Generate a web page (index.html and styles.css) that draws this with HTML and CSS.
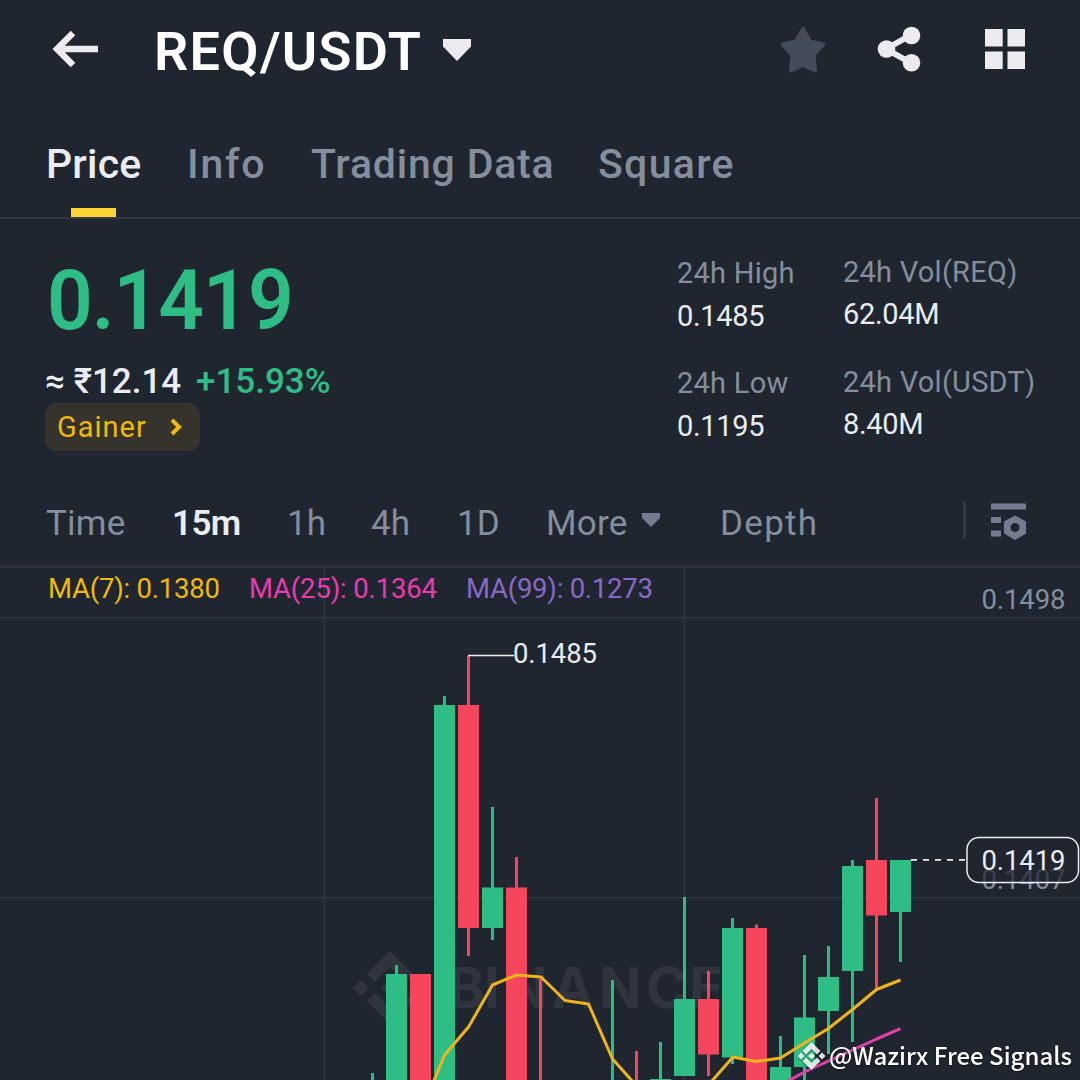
FILE: index.html
```html
<!DOCTYPE html>
<html lang="en">
<head>
<meta charset="utf-8">
<title>REQ/USDT</title>
<link rel="stylesheet" href="styles.css">
</head>
<body>
<main class="screen">
  <header class="header">
    <svg class="back" viewBox="0 0 46 36"><path d="M21 2 5 18l16 16M5 18h41" fill="none" stroke="currentColor" stroke-width="6.4"/></svg>
    <h1 class="pair">REQ/USDT</h1>
    <svg class="pair-caret" viewBox="0 0 28 22"><path d="M0 0h28v7.500L14 22 0 7.500z" fill="currentColor"/></svg>
    <div class="actions">
      <svg class="star" viewBox="0 0 44 46"><path d="M22 2l6.900 12.500L42 17.400l-9.500 10.800L34 43.500 22 38 10 43.500l1.500-15.300L2 17.400l13.100-2.900z" fill="currentColor" stroke="currentColor" stroke-width="4" stroke-linejoin="round"/></svg>
      <svg class="share" viewBox="0 0 44 46"><path d="M34 9 9 23l25 14" fill="none" stroke="currentColor" stroke-width="6"/><circle cx="9.500" cy="23" r="8.800" fill="currentColor"/><circle cx="34.500" cy="9.500" r="8.800" fill="currentColor"/><circle cx="34.500" cy="36.700" r="8.800" fill="currentColor"/></svg>
      <svg class="grid-icon" viewBox="0 0 40 40"><path d="M0 0h17.700v17.500H0zM22.500 0H40v17.500H22.500zM0 22.500h17.700V40H0zM22.500 22.500H40V40H22.500z" fill="currentColor"/></svg>
    </div>
  </header>

  <nav class="tabs">
    <a class="tab tab-price active">Price</a>
    <a class="tab tab-info">Info</a>
    <a class="tab tab-trading">Trading Data</a>
    <a class="tab tab-square">Square</a>
  </nav>

  <section class="summary">
    <div class="quote">
      <div class="last">0.1419</div>
      <div class="converted"><span class="fiat">≈ ₹12.14</span><span class="change">+15.93%</span></div>
      <div class="badge"><span>Gainer</span><svg class="chevron" viewBox="0 0 12 18"><path d="M2 2l7 7-7 7" fill="none" stroke="currentColor" stroke-width="4"/></svg></div>
    </div>
    <dl class="stats stats-range">
      <dt>24h High</dt><dd>0.1485</dd>
      <dt>24h Low</dt><dd>0.1195</dd>
    </dl>
    <dl class="stats stats-volume">
      <dt>24h Vol(REQ)</dt><dd>62.04M</dd>
      <dt>24h Vol(USDT)</dt><dd>8.40M</dd>
    </dl>
  </section>

  <div class="intervals">
    <span class="interval i-time">Time</span>
    <span class="interval i-15m selected">15m</span>
    <span class="interval i-1h">1h</span>
    <span class="interval i-4h">4h</span>
    <span class="interval i-1d">1D</span>
    <span class="interval i-more">More</span>
    <svg class="more-caret" viewBox="0 0 18 14"><path d="M0 0h18v5L9 14 0 5z" fill="currentColor"/></svg>
    <span class="interval i-depth">Depth</span>
    <i class="separator"></i>
    <svg class="settings" viewBox="0 0 36 37"><path d="M0 .5h35v6H0zM0 14h10v6H0zM0 27.500h10v6H0z" fill="currentColor"/><path fill-rule="evenodd" d="M24 12.500l11 6v12L24 37l-11-6.500v-12zM24 20a4.500 4.500 0 1 0 0 9 4.500 4.500 0 0 0 0-9z" fill="currentColor"/></svg>
  </div>

  <svg class="chart" viewBox="0 568 1080 512">
    <g class="watermark">
      <path d="M390 951l23 23-8 8-15-15-15 15-8-8zM390 1024l23-23-8-8-15 15-15-15-8 8zM361 980l8 8-8 8-8-8zM419 980l8 8-8 8-8-8zM390 979l9 9-9 9-9-9z"/>
      <text x="448 484 505 552 599 646 689" y="1008">BINANCE</text>
    </g>
    <path class="gridlines" d="M0 617.500H1080M0 897.500H1080M324.500 568V1080M684.500 568V1080"/>
    <g class="up">
      <path class="wick" d="M372.500 1073V1080M396.500 965V1080M444.500 696V1080M492.500 807V940M612.500 980V1080M660.500 1042V1080M684.500 897V1076M732.500 918V1064M780.500 1036V1080M804.500 955V1080M828.500 946V1054M852.500 860V1042M900.500 860V962"/>
      <path d="M386 974h21v106h-21zM434 705h21v375h-21zM482 887.500h21V928h-21zM650 1079h21v1h-21zM674 999h21v77h-21zM722 928h21v129.500h-21zM770 1067h21v13h-21zM794 1017.500h21V1067h-21zM818 977h21v34h-21zM842 866h21v105h-21zM890 860h21v52h-21z"/>
    </g>
    <g class="down">
      <path class="wick" d="M468.500 656V956M516.500 857V1080M540.500 979V1080M636.500 1051V1080M708.500 971V1076M756.500 924.500V1080M876.500 798V989"/>
      <path d="M410 974h21v106h-21zM458 705h21v223h-21zM506 887.500h21V1080h-21zM698 999h21v55.500h-21zM746 928h21v152h-21zM866 860h21v55.500h-21z"/>
    </g>
    <path class="line ma25" d="M786 1082L804.500 1072 828.500 1061 876.500 1039 900.500 1028.700"/>
    <path class="line ma7" d="M433 1083L444.500 1055 468.500 1027 492.500 985 516.500 975 541 977 565 1000.500 588.500 1004 612.500 1059 634 1083M711 1082L733 1057 756 1061.500 780.500 1058 804.500 1043 828.500 1028.500 852.500 1009.500 876.500 989.500 900.500 980"/>
    <path class="marker" d="M468 655.500H514"/>
    <text class="label hi" x="513" y="663" textLength="84">0.1485</text>
    <text class="label c7" x="48" y="598" textLength="172">MA(7): 0.1380</text>
    <text class="label c25" x="249" y="598" textLength="188">MA(25): 0.1364</text>
    <text class="label c99" x="466" y="598" textLength="187">MA(99): 0.1273</text>
    <text class="label axis" x="981.500" y="609" textLength="84">0.1498</text>
    <text class="label axis" x="981.500" y="889" textLength="84">0.1407</text>
    <path class="current" d="M911 859.800H966"/>
    <rect class="tag" x="967" y="837.500" width="111.500" height="45" rx="12"/>
    <text class="label hi" x="981.500" y="870" textLength="84">0.1419</text>
    <g class="author">
      <path d="M811.500 1042l9 9-3.500 3.500-5.500-5.500-5.500 5.500-3.500-3.500zM811.500 1070l9-9-3.500-3.500-5.500 5.500-5.500-5.500-3.500 3.500zM801 1052.500l3.500 3.500-3.500 3.500-3.500-3.500zM822 1052.500l3.500 3.500-3.500 3.500-3.500-3.500zM811.500 1052.500l3.500 3.500-3.500 3.500-3.500-3.500z"/>
      <text x="829" y="1065" textLength="243">@Wazirx Free Signals</text>
    </g>
  </svg>
</main>
</body>
</html>
```
FILE: styles.css
```css
* { box-sizing: border-box; margin: 0; padding: 0; }
body { background: #202630; font-family: Roboto, "Liberation Sans", sans-serif; color: #eaecef; }
.screen { width: 1080px; height: 1080px; overflow: hidden; display: flex; flex-direction: column; background: #202630; }
svg { display: block; flex: none; }

.header { height: 104px; display: flex; align-items: center; padding: 0 55px 6px 52px; color: #ebebf0; }
.back { width: 46px; height: 36px; }
.pair { width: 290px; margin-left: 56px; padding-top: 6px; font-size: 54px; font-weight: 600; line-height: 70px; letter-spacing: 1.300px; white-space: nowrap; color: #fff; }
.pair-caret { width: 28px; height: 22px; margin-left: -1px; margin-top: 2px; }
.actions { display: flex; align-items: center; margin-left: auto; }
.star { width: 44px; height: 46px; margin-right: 52px; margin-top: 2px; color: #444c5a; }
.share { width: 44px; height: 46px; margin-right: 64px; }
.grid-icon { width: 40px; height: 40px; }

.tabs { height: 115px; display: flex; padding: 30px 0 0 46px; border-bottom: 2px solid #333943; font-size: 41px; font-weight: 500; line-height: 60px; color: #848e9c; }
.tab { height: 83px; white-space: nowrap; }
.tab-price { width: 141px; letter-spacing: .2px; }
.tab-info { width: 124px; letter-spacing: 1.800px; }
.tab-trading { width: 287px; letter-spacing: .8px; }
.tab-square { letter-spacing: 1.300px; }
.tab.active { color: #eaecef; }
.tab.active::after { content: ""; display: block; width: 45px; height: 9px; margin: 14px 0 0 25px; background: #fcd535; }

.summary { height: 262px; display: flex; }
.quote { width: 677px; padding: 36px 0 0 45px; }
.last { height: 92px; padding-left: 2px; font-size: 83px; font-weight: 600; line-height: 92px; letter-spacing: -1px; color: #2ebd85; transform: scaleX(.965); transform-origin: left; }
.converted { height: 56px; display: flex; font-size: 35px; font-weight: 500; line-height: 70px; white-space: nowrap; }
.fiat { width: 151px; }
.change { color: #2ebd85; }
.badge { width: 155px; height: 48px; display: flex; align-items: center; justify-content: space-between; padding: 0 18px 0 12px; border-radius: 12px; background: #36332c; color: #f0b90b; font-size: 29px; line-height: 50px; letter-spacing: 1px; }
.chevron { width: 12px; height: 18px; }
.stats { padding-top: 33px; font-size: 29px; white-space: nowrap; }
.stats-range { width: 166px; }
.stats-volume { padding-top: 32px; }
.stats dt { height: 43px; line-height: 43px; letter-spacing: .25px; color: #848e9c; }
.stats dd { height: 43px; line-height: 43px; margin-bottom: 24px; letter-spacing: -.3px; }
.stats-volume dd { line-height: 41px; }
.stats-volume dt { line-height: 42px; }

.intervals { height: 87px; display: flex; align-items: center; padding-left: 46px; border-bottom: 3px solid #2b303b; color: #848e9c; font-size: 35px; }
.interval { white-space: nowrap; }
.selected { color: #eaecef; font-weight: 600; letter-spacing: -.6px; }
.i-time { width: 126px; letter-spacing: .2px; }
.i-15m { width: 115px; }
.i-1h { width: 84px; }
.i-4h { width: 86px; }
.i-1d { width: 89px; }
.i-more { width: 96px; letter-spacing: .2px; }
.more-caret { width: 18px; height: 14px; margin-top: -6px; color: #767c8f; }
.i-depth { width: 243px; margin-left: 60px; letter-spacing: 1.300px; }
.separator { width: 3px; height: 36px; margin-top: -6px; background: #333a45; }
.settings { width: 36px; height: 37px; margin-left: 25px; margin-top: -3px; color: #767c8f; }

.chart { width: 1080px; height: 512px; }
.gridlines { fill: none; stroke: #333943; stroke-width: 1.300; }
.watermark { fill: #2f343f; }
.watermark text { font: 700 56px Inter, sans-serif; }
.up { fill: #2ebd85; stroke: none; }
.down { fill: #f6465d; stroke: none; }
.wick { fill: none; stroke-width: 3; }
.up .wick { stroke: #2ebd85; }
.down .wick { stroke: #f6465d; }
.line { fill: none; stroke-width: 3; stroke-linejoin: round; }
.ma7 { stroke: #f0b41b; }
.ma25 { stroke: #e042ae; }
.marker { stroke: #eaecef; stroke-width: 1.500; }
.label { font: 400 27.500px Roboto, sans-serif; }
.hi { fill: #eaecef; }
.c7 { fill: #f0b90b; }
.c25 { fill: #e93bb0; }
.c99 { fill: #8b68c8; }
.axis { fill: #848e9c; }
.current { stroke: #eaecef; stroke-width: 1.800; stroke-dasharray: 6 6; }
.tag { fill: #202630; fill-opacity: .72; stroke: #eaecef; stroke-width: 1.500; }
.author { fill: #fff; filter: drop-shadow(0 1px 1px rgba(0, 0, 0, .5)); }
.author path { fill-opacity: .85; }
.author text { font: 500 24px "Noto Sans CJK SC", sans-serif; }
```
